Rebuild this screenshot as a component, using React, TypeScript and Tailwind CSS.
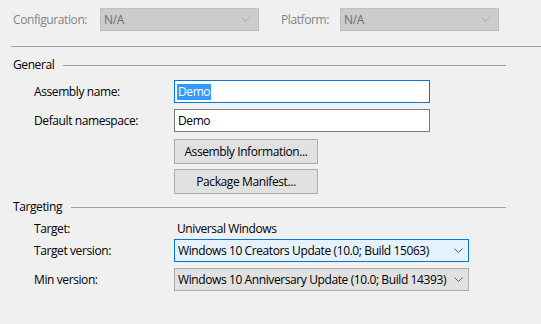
import React from 'react';

const Chevron = ({ color }: { color: string }) => (
  <svg width="9" height="5" viewBox="0 0 9 5" className="shrink-0">
    <polyline points="0.5,0.5 4.5,4.5 8.5,0.5" fill="none" stroke={color} strokeWidth="1" />
  </svg>
);

const GroupHeader = ({ title }: { title: string }) => (
  <div className="flex items-center h-[16px] pl-[13px] pr-[35px]">
    <span className="pr-[9px]">{title}</span>
    <div className="flex-1 h-px bg-[#a0a0a0]" />
  </div>
);

const Row = ({ label, children }: { label: string; children: React.ReactNode }) => (
  <div className="flex items-center pl-[34px]">
    <span className="w-[140px] shrink-0">{label}</span>
    {children}
  </div>
);

const App: React.FC = () => {
  return (
    <div
      className="w-[541px] h-[324px] bg-[#f0f0f0] text-[12px] leading-none tracking-[-0.4px] whitespace-nowrap text-black overflow-hidden flex flex-col"
      style={{ fontFamily: '"Open Sans", "Noto Sans", sans-serif' }}
    >
      {/* Configuration / Platform bar */}
      <div className="flex items-center h-[23px] mt-[8px] text-[#838383]">
        <span className="pl-[13px] w-[100px] shrink-0">Configuration:</span>
        <div className="w-[159px] h-[23px] bg-[#cccccc] border border-[#bfbfbf] flex items-center justify-between pl-[3px] pr-[8px] text-[#6d6d6d]">
          <span>N/A</span>
          <Chevron color="#a6a6a6" />
        </div>
        <span className="pl-[22px] w-[81px] shrink-0">Platform:</span>
        <div className="w-[159px] h-[23px] bg-[#cccccc] border border-[#bfbfbf] flex items-center justify-between pl-[3px] pr-[8px] text-[#6d6d6d]">
          <span>N/A</span>
          <Chevron color="#a6a6a6" />
        </div>
      </div>
      <div className="mt-[15px] ml-[11px] h-px bg-[#a0a0a0]" />

      {/* General */}
      <div className="mt-[10px]">
        <GroupHeader title="General" />
      </div>
      <div className="mt-[7px]">
        <Row label="Assembly name:">
          <div className="w-[256px] h-[23px] bg-white border border-[#0078d7] flex items-center pl-[2px]">
            <span className="bg-[#3399ff] text-white px-px py-[2px]">Demo</span>
          </div>
        </Row>
      </div>
      <div className="mt-[6px]">
        <Row label="Default namespace:">
          <div className="w-[256px] h-[23px] bg-white border border-[#7a7a7a] flex items-center pl-[3px]">
            Demo
          </div>
        </Row>
      </div>
      <button className="mt-[7px] ml-[174px] w-[144px] h-[25px] bg-[#e1e1e1] border border-[#adadad] text-[12px]">
        Assembly Information...
      </button>
      <button className="mt-[5px] ml-[174px] w-[144px] h-[25px] bg-[#e1e1e1] border border-[#adadad] text-[12px]">
        Package Manifest...
      </button>

      {/* Targeting */}
      <div className="mt-[5px]">
        <GroupHeader title="Targeting" />
      </div>
      <div className="mt-[6px] h-[16px] flex items-center">
        <Row label="Target:">
          <span className="pl-[3px]">Universal Windows</span>
        </Row>
      </div>
      <div className="mt-[2px]">
        <Row label="Target version:">
          <div className="w-[295px] h-[23px] bg-[#e5f1fb] border border-[#0078d7] flex items-center pl-[3px] pr-[5px]">
            <span className="flex-1">Windows 10 Creators Update (10.0; Build 15063)</span>
            <Chevron color="#606060" />
          </div>
        </Row>
      </div>
      <div className="mt-[6px]">
        <Row label="Min version:">
          <div className="w-[295px] h-[23px] bg-[#e1e1e1] border border-[#adadad] flex items-center pl-[3px] pr-[5px]">
            <span className="flex-1">Windows 10 Anniversary Update (10.0; Build 14393)</span>
            <Chevron color="#606060" />
          </div>
        </Row>
      </div>
    </div>
  );
};

export default App;
